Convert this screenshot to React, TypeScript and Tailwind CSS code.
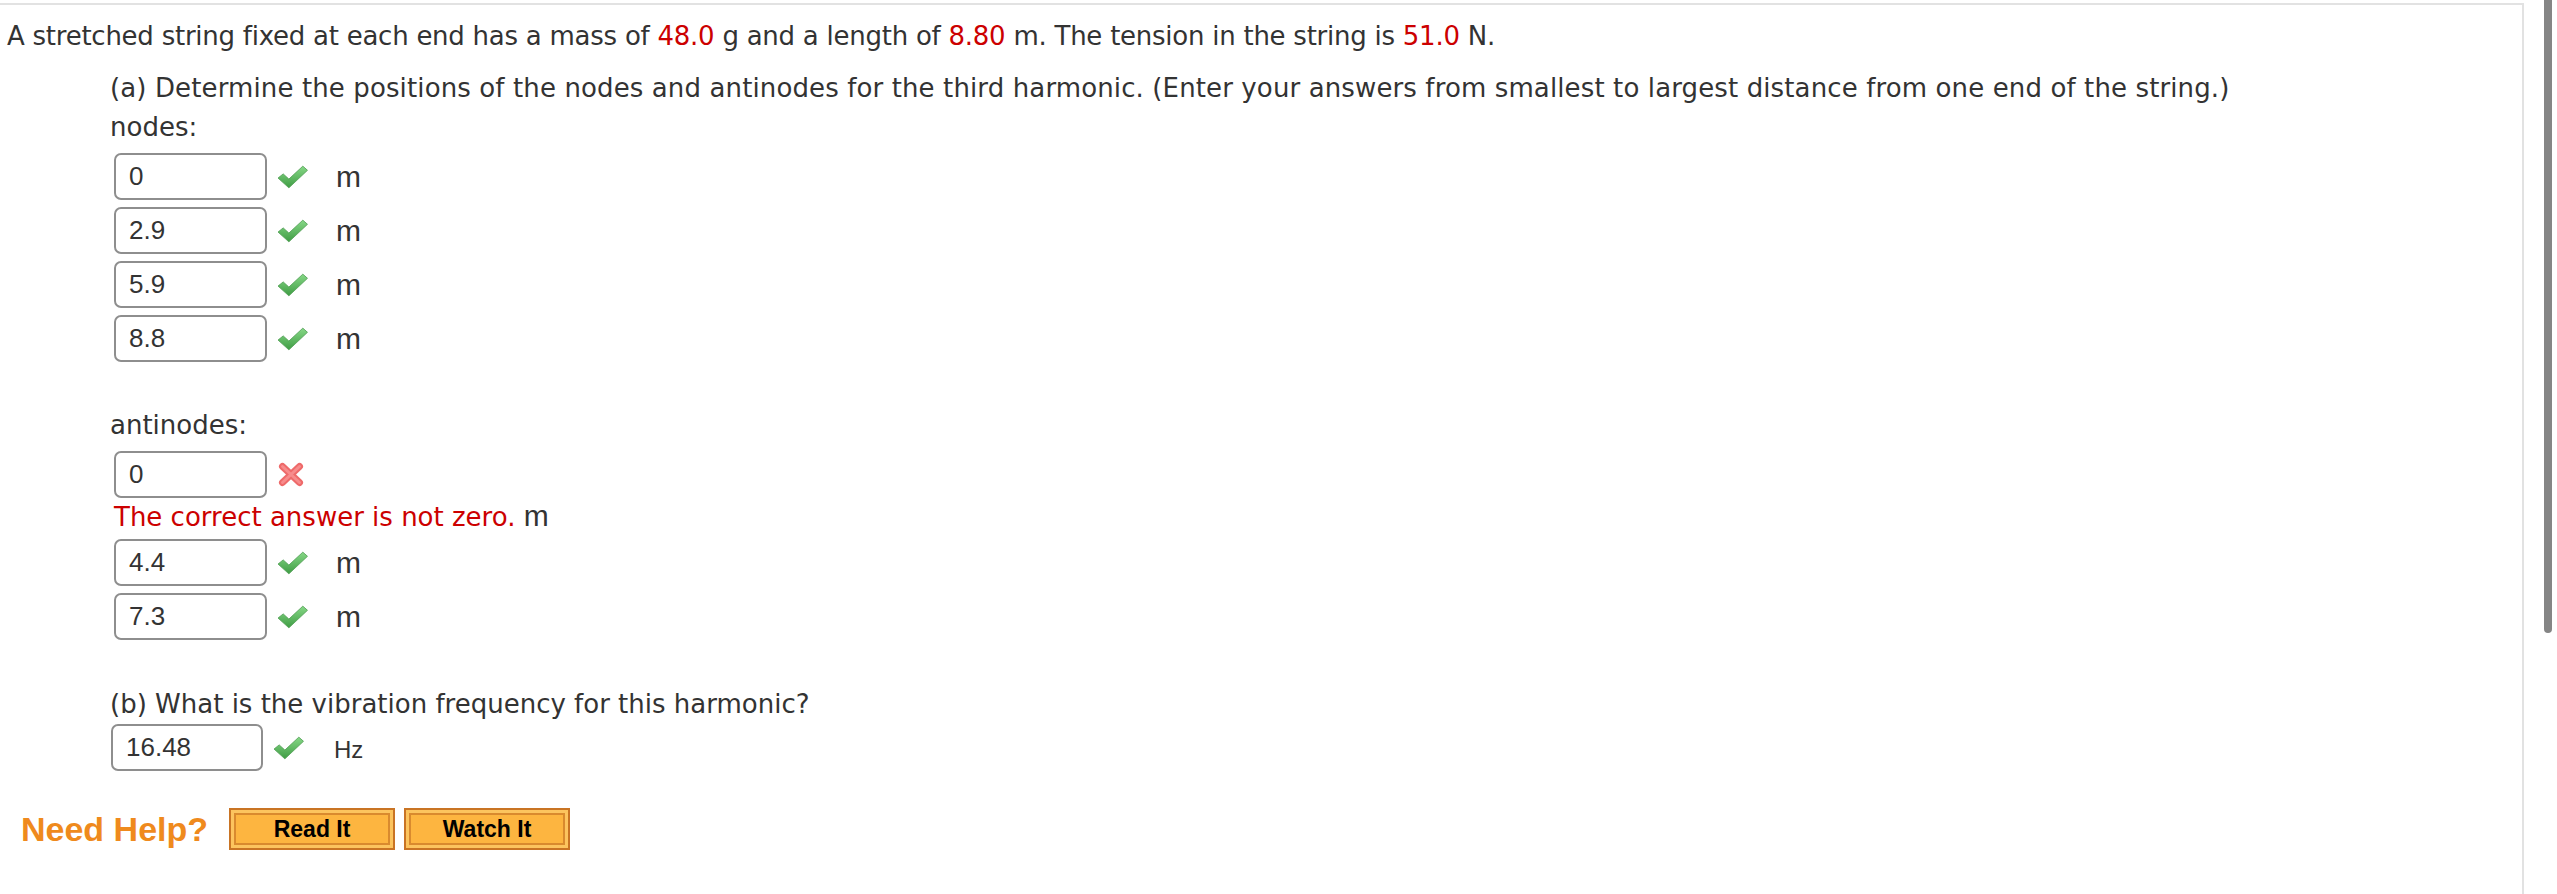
import type { ReactNode } from 'react';

const body = "font-['DejaVu_Sans',Verdana,sans-serif] text-[26px] leading-[39px] text-[#333]";

function Check() {
  return (
    <svg width="31" height="24" viewBox="0 0 30 23" className="shrink-0">
      <defs>
        <linearGradient id="chk" x1="0" y1="0" x2="0" y2="1">
          <stop offset="0" stopColor="#86d886" />
          <stop offset="1" stopColor="#3f9c44" />
        </linearGradient>
      </defs>
      <path d="M1 12.5 L6 8.5 L11.5 13.5 L25 1 L29.5 5 L11.5 22 Z" fill="url(#chk)" stroke="#4f9e52" strokeWidth="0.8" strokeLinejoin="round" />
    </svg>
  );
}

function Cross() {
  return (
    <svg width="26" height="25" viewBox="0 0 26 25" className="shrink-0">
      <path d="M4.5 4.5 L21.5 20.5 M21.5 4.5 L4.5 20.5" stroke="#ee6a6a" strokeWidth="7" strokeLinecap="round" />
      <path d="M4.5 4.5 L21.5 20.5 M21.5 4.5 L4.5 20.5" stroke="#f78c8c" strokeWidth="3" strokeLinecap="round" />
    </svg>
  );
}

function Box({ value, className = '' }: { value: string; className?: string }) {
  return (
    <div
      className={`h-[47px] shrink-0 rounded-[7px] border-2 border-[#8e8e8e] bg-white pl-[13px] flex items-center font-['Liberation_Sans',Arial,sans-serif] text-[26px] text-[#333] ${className}`}
    >
      {value}
    </div>
  );
}

function Row({ value, unit = 'm', wide = false }: { value: string; unit?: ReactNode; wide?: boolean }) {
  return (
    <div className="flex items-center">
      <Box value={value} className={wide ? 'w-[152px] ml-[1px]' : 'w-[153px] ml-[4px]'} />
      <div className="ml-[10px]">
        <Check />
      </div>
      <span className="ml-[28px] font-['Liberation_Sans',Arial,sans-serif] text-[30px] leading-none text-[#333]">
        {unit}
      </span>
    </div>
  );
}

function HelpButton({ label, width }: { label: string; width: string }) {
  return (
    <div className={`${width} h-[42px] border-2 border-[#c97424] bg-[#fcc45e] p-[3px]`}>
      <div className="h-full w-full border-2 border-[#d98a2e] bg-[#fdb540] flex items-center justify-center font-['Liberation_Sans',Arial,sans-serif] text-[23px] font-bold text-black">
        {label}
      </div>
    </div>
  );
}

export default function App() {
  return (
    <div className="w-[2557px] h-[894px] bg-white flex overflow-hidden">
      <div className={`w-[2524px] mt-[3px] border-t-2 border-r-2 border-[#e2e2e2] pl-[7px] pt-[12px] ${body}`}>
        <p className="tracking-[-0.25px]">
          A stretched string fixed at each end has a mass of <span className="text-[#cc0000]">48.0</span> g and a
          length of <span className="text-[#cc0000]">8.80</span> m. The tension in the string is{' '}
          <span className="text-[#cc0000]">51.0</span> N.
        </p>

        <div className="ml-[103px] mt-[13px]">
          <p className="tracking-[0.12px]">
            (a) Determine the positions of the nodes and antinodes for the third harmonic. (Enter your answers from
            smallest to largest distance from one end of the string.)
          </p>
          <p>nodes:</p>
          <div className="mt-[6px] flex flex-col gap-[7px]">
            <Row value="0" />
            <Row value="2.9" />
            <Row value="5.9" />
            <Row value="8.8" />
          </div>

          <p className="mt-[44px]">antinodes:</p>
          <div className="mt-[6px] flex items-center">
            <Box value="0" className="w-[153px] ml-[4px]" />
            <div className="ml-[11px]">
              <Cross />
            </div>
          </div>
          <p className="ml-[4px]">
            <span className="text-[#cc0000]">The correct answer is not zero.</span>{' '}
            <span className="font-['Liberation_Sans',Arial,sans-serif] text-[30px] leading-none">m</span>
          </p>
          <div className="mt-[2px] flex flex-col gap-[7px]">
            <Row value="4.4" />
            <Row value="7.3" />
          </div>

          <p className="mt-[45px]">(b) What is the vibration frequency for this harmonic?</p>
          <div>
            <Row value="16.48" wide unit={<span className="text-[24px] ml-[2px]">Hz</span>} />
          </div>
        </div>

        <div className="mt-[37px] ml-[14px] flex items-center">
          <span className="font-['Liberation_Sans',Arial,sans-serif] text-[34px] font-bold text-[#ef8a1d] leading-none">
            Need Help?
          </span>
          <div className="ml-[21px] flex gap-[9px]">
            <HelpButton label="Read It" width="w-[166px]" />
            <HelpButton label="Watch It" width="w-[166px]" />
          </div>
        </div>
      </div>
      <div className="flex-1">
        <div className="ml-[20px] w-[8px] h-[633px] rounded-b-[4px] bg-[#858585]" />
      </div>
    </div>
  );
}
